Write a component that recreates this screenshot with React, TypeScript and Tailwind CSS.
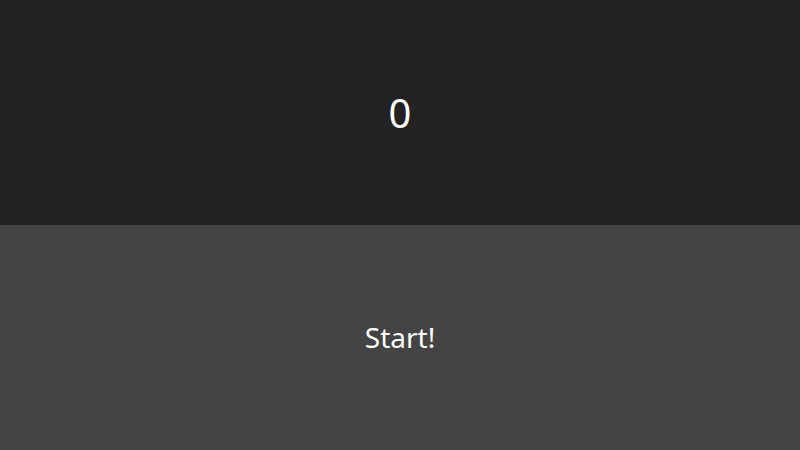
export default function App() {
  return (
    <div className="flex h-[450px] w-[800px] flex-col text-white" style={{ fontFamily: '"Noto Sans", sans-serif' }}>
      <div className="flex h-[225px] items-center justify-center bg-[#222222] text-[40px]">0</div>
      <div className="flex h-[225px] items-center justify-center bg-[#444444] pb-[2px] text-[28px]">Start!</div>
    </div>
  );
}
